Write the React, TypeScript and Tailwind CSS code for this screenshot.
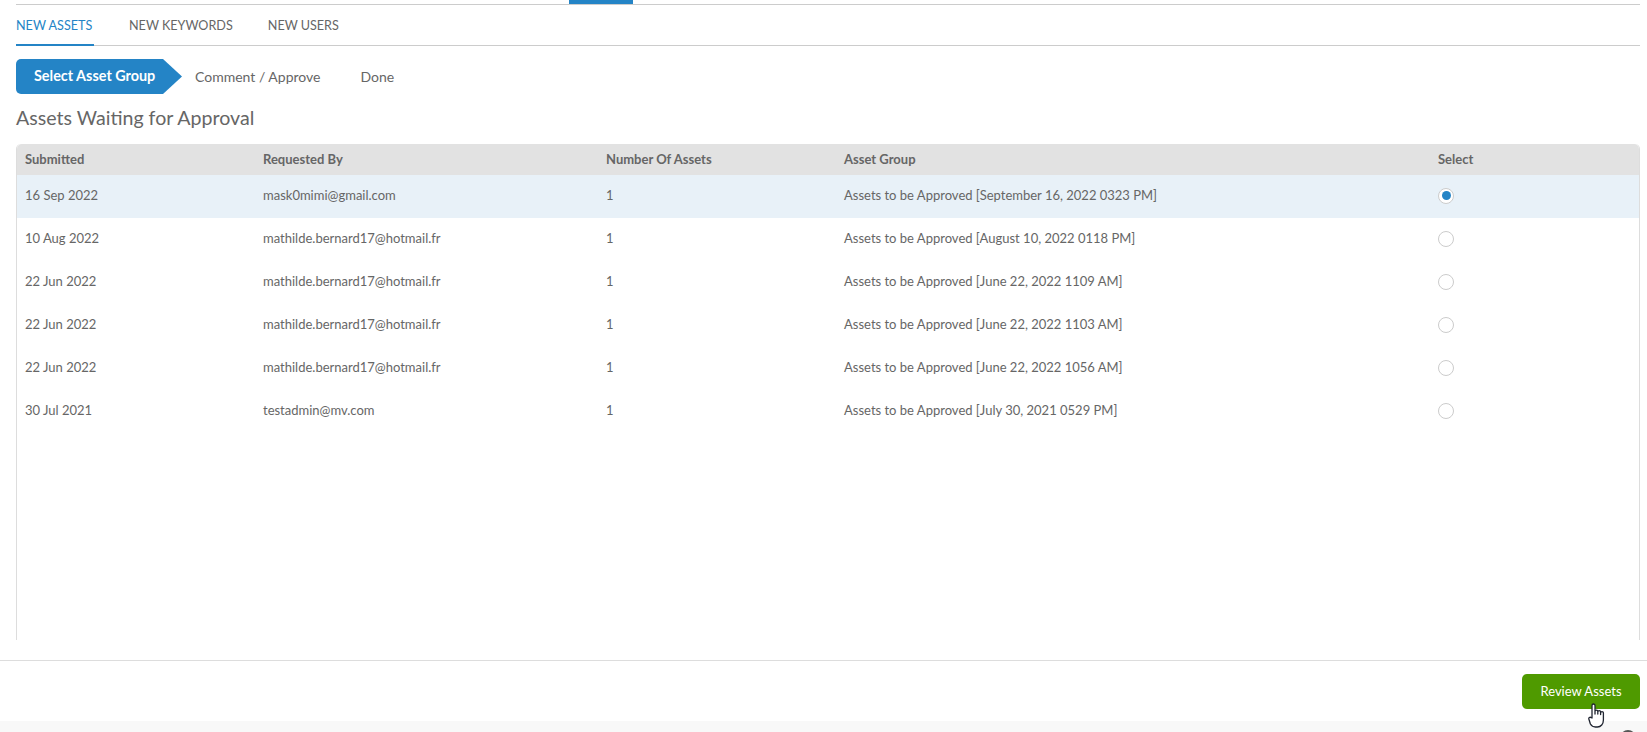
const rows = [
  ["16 Sep 2022", "mask0mimi@gmail.com", "Assets to be Approved [September 16, 2022 0323 PM]", true],
  ["10 Aug 2022", "mathilde.bernard17@hotmail.fr", "Assets to be Approved [August 10, 2022 0118 PM]", false],
  ["22 Jun 2022", "mathilde.bernard17@hotmail.fr", "Assets to be Approved [June 22, 2022 1109 AM]", false],
  ["22 Jun 2022", "mathilde.bernard17@hotmail.fr", "Assets to be Approved [June 22, 2022 1103 AM]", false],
  ["22 Jun 2022", "mathilde.bernard17@hotmail.fr", "Assets to be Approved [June 22, 2022 1056 AM]", false],
  ["30 Jul 2021", "testadmin@mv.com", "Assets to be Approved [July 30, 2021 0529 PM]", false],
] as const

const App = () => {
  return (
    <div className="relative h-[732px] w-[1647px] overflow-hidden bg-white font-['Lato',sans-serif] text-[13px] text-[#666]">
      <div className="ml-4 mr-[7px] h-[5px] border-b border-[#ccc] pl-[553px]">
        <div className="h-[4px] w-[64px] bg-[#2484c6]"></div>
      </div>
      <div className="ml-4 mr-[7px] flex h-[41px] gap-[35px] border-b border-[#ccc] text-[12.6px]">
        <div className="h-[41px] w-[78px] border-b-2 border-[#2484c6] pt-[12px] text-[#2484c6]">NEW ASSETS</div>
        <div className="pt-[12px]">NEW KEYWORDS</div>
        <div className="pt-[12px]">NEW USERS</div>
      </div>
      <div className="ml-4 mr-[7px] mt-[13px] flex h-[35px] items-center text-[14px]">
        <div className="flex h-[35px] w-[166px] items-center rounded-l-[5px] bg-[#2484c6] pb-[2px] pl-[18px] text-[14.4px] font-bold text-white [clip-path:polygon(0_0,147px_0,100%_50%,147px_100%,0_100%)]">Select Asset Group</div>
        <div className="ml-[13px]">Comment / Approve</div>
        <div className="ml-[40px]">Done</div>
      </div>
      <div className="ml-4 mr-[7px] mt-[12px] text-[19.6px] leading-6">Assets Waiting for Approval</div>
      <div className="ml-4 mr-[7px] mt-[14px] h-[496px] rounded-t-[5px] border-x border-[#ddd]">
        <div className="grid h-[31px] grid-cols-[238px_343px_238px_594px_1fr] items-center rounded-t-[5px] bg-[#e2e2e2] px-2 font-bold">
          <div>Submitted</div><div>Requested By</div><div>Number Of Assets</div><div>Asset Group</div><div>Select</div>
        </div>
        {rows.map((r, i) => (
          <div key={i} className={`grid h-[43px] grid-cols-[238px_343px_238px_594px_1fr] items-center px-2 pb-[2px] ${r[3] ? "bg-[#e8f1f8]" : ""}`}>
            <div>{r[0]}</div><div>{r[1]}</div><div>1</div><div>{r[2]}</div>
            <div className="flex h-4 w-4 items-center justify-center rounded-full border border-[#ccc] bg-white">{r[3] && <div className="h-[9px] w-[9px] rounded-full bg-[#2484c6]"></div>}</div>
          </div>
        ))}
      </div>
      <div className="mt-[20px] flex h-[61px] items-start justify-end border-t border-[#ddd] pr-[7px] pt-[13px]">
        <div className="flex h-[35px] w-[118px] items-center justify-center rounded-[5px] bg-[#4f9a00] text-white">Review Assets</div>
      </div>
      <div className="h-[11px] bg-[#f8f8f8]"></div>
      {/* mouse pointer and the corner widget peeking in at the bottom */}
      <svg className="absolute left-[1588px] top-[703px] h-[25px] w-[18px]" viewBox="0 0 18 25" fill="white" stroke="#1f2430" strokeWidth="1.3" strokeLinejoin="round">
        <path d="M4 15V2.5a1.5 1.5 0 0 1 3 0V11V8.5a1.4 1.4 0 0 1 2.8 0V11V9a1.4 1.4 0 0 1 2.8 0V11.5V10a1.4 1.4 0 0 1 2.8 0v7c0 4-2.5 7-6 7h-2c-2.5 0-3.8-1-5-3L1 16.5c-.8-1.5 1-3 2.3-1.8Z" />
      </svg>
      <div className="absolute left-[1620px] top-[730px] h-4 w-4 rounded-full bg-[#555]"></div>
    </div>
  )
}
export default App
